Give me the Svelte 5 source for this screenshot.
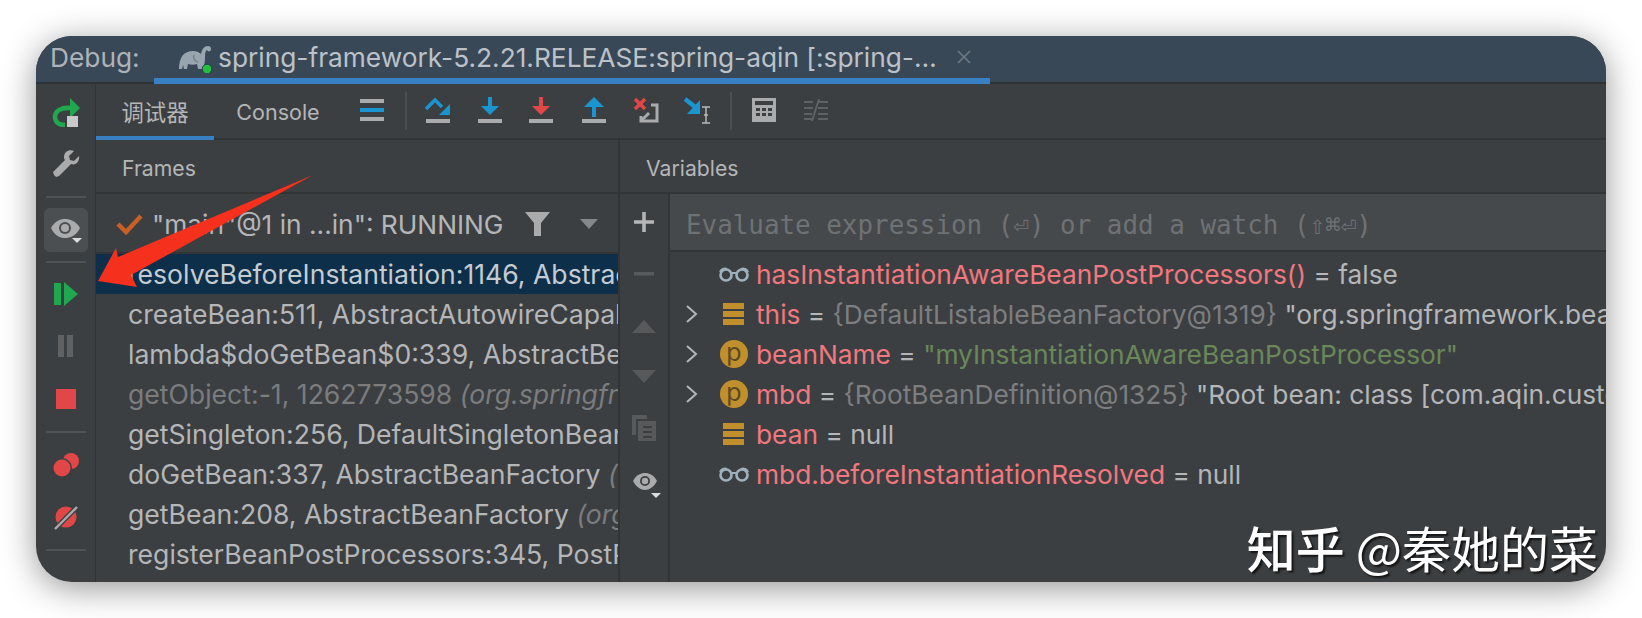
<script lang="ts">
	const frames = [
		{ text: 'resolveBeforeInstantiation:1146, AbstractAutowireCapableBeanFactory', selected: true },
		{ text: 'createBean:511, AbstractAutowireCapableBeanFactory' },
		{ text: 'lambda$doGetBean$0:339, AbstractBeanFactory' },
		{ text: 'getObject:-1, 1262773598 ', pkg: '(org.springframework.beans)', muted: true },
		{ text: 'getSingleton:256, DefaultSingletonBeanRegistry' },
		{ text: 'doGetBean:337, AbstractBeanFactory ', pkg: '(org.springframework)' },
		{ text: 'getBean:208, AbstractBeanFactory ', pkg: '(org.springframework)' },
		{ text: 'registerBeanPostProcessors:345, PostProcessorRegistrationDelegate' }
	];
</script>

<div class="page">
	<div class="window">
		<header class="titlebar">
			<span class="debug-label">Debug:</span>
			<div class="run-tab">
				<svg class="gradle" viewBox="0 0 34 28" width="34" height="28">
					<path d="M0 24C0 12 5 6 14 6c3 0 6 1 8 3 1-5 3-8 7-8 2 0 3 1 3 3 0 2-2 3-3 2-1-1-2-1-2 0-1 2-1 4-1 7 0 4-1 8-2 11h-5l-1-5c-3 1-6 1-9 0l-1 5H5l-1-4-1 4H0z" fill="#98a5ae"/>
					<path d="M15 10c-1 3 0 6 4 7" fill="none" stroke="#6f7f8c" stroke-width="1.4"/>
					<circle cx="28" cy="24" r="4.8" fill="#1fc13f" stroke="#2f3c47" stroke-width="1"/>
				</svg>
				<span class="run-name">spring-framework-5.2.21.RELEASE:spring-aqin [:spring-…</span>
				<svg class="close" viewBox="0 0 14 14" width="14" height="14">
					<path d="M1 1l12 12M13 1L1 13" stroke="#6f7a84" stroke-width="1.6"/>
				</svg>
			</div>
		</header>

		<div class="body">
			<aside class="side">
				<svg viewBox="0 0 28 30" width="28" height="30">
					<path d="M19 11C9 10 3 14 3 20c0 5 4 8 10 8" fill="none" stroke="#1fa84f" stroke-width="4.6"/>
					<path d="M18 1l10 10-10 10z" fill="#1fa84f"/>
					<rect x="15" y="19" width="11" height="11" fill="#c9c9c9"/>
				</svg>
				<svg class="wrench" viewBox="0 0 28 28" width="28" height="28">
					<path d="M27 6l-5 5-4-1-1-4 5-5c-5-2-10 1-10 6 0 1 0 2 1 3L1 22l1 3 2 2 3-1 12-12c5 2 9-3 8-8z" fill="#a9abad"/>
				</svg>
				<i class="sep first"></i>
				<div class="eye-btn">
					<svg viewBox="0 0 32 26" width="32" height="26">
						<path d="M1 11C5 4 10 2 15 2s11 2 15 9c-4 8-10 10-15 10S5 19 1 11z" fill="#a9abad"/>
						<circle cx="15" cy="11" r="6" fill="#4c4f51"/>
						<circle cx="15" cy="11" r="4" fill="#a9abad"/>
						<path d="M22 21h10l-5 5z" fill="#dcdcdc"/>
					</svg>
				</div>
				<i class="sep"></i>
				<svg class="resume" viewBox="0 0 26 24" width="26" height="24">
					<rect x="1" y="1" width="7" height="22" fill="#1fa84f"/>
					<path d="M11 0l14 12-14 12z" fill="#1fa84f"/>
				</svg>
				<svg class="pause" viewBox="0 0 18 22" width="18" height="22">
					<rect x="1" y="0" width="6" height="22" fill="#5f6163"/>
					<rect x="10" y="0" width="6" height="22" fill="#5f6163"/>
				</svg>
				<div class="stop"></div>
				<i class="sep stop-sep"></i>
				<svg class="points" viewBox="0 0 28 28" width="28" height="28">
					<circle cx="19" cy="10" r="8" fill="#e14747"/>
					<circle cx="10" cy="17" r="10" fill="#3c3f41"/>
					<circle cx="10" cy="17" r="8.5" fill="#e14747"/>
				</svg>
				<svg class="mute" viewBox="0 0 26 26" width="26" height="26">
					<circle cx="13" cy="13" r="10.5" fill="#e14747"/>
					<path d="M2 25L24 3" stroke="#3c3f41" stroke-width="5"/>
					<path d="M2 25L24 3" stroke="#a9abad" stroke-width="2.4"/>
				</svg>
				<i class="sep last"></i>
			</aside>

			<main class="main">
				<div class="toolbar">
					<div class="tab active">调试器</div>
					<div class="tab console">Console</div>
					<svg class="tool menu" viewBox="0 0 24 22" width="24" height="22">
						<rect y="0" width="24" height="4" fill="#a9abad"/>
						<rect y="9" width="24" height="4" fill="#1b95d0"/>
						<rect y="18" width="24" height="4" fill="#a9abad"/>
					</svg>
					<i class="tool-sep"></i>
					<svg class="tool" viewBox="0 0 26 26" width="26" height="26">
						<path d="M1 12L10 3l7 7" fill="none" stroke="#1b95d0" stroke-width="3.4"/>
						<path d="M25 7v11H14z" fill="#1b95d0"/>
						<rect x="1" y="22" width="24" height="4" fill="#a9abad"/>
					</svg>
					<svg class="tool" viewBox="0 0 24 26" width="24" height="26">
						<rect x="10" y="0" width="4" height="10" fill="#1b95d0"/>
						<path d="M3 9h18l-9 9z" fill="#1b95d0"/>
						<rect y="22" width="24" height="4" fill="#a9abad"/>
					</svg>
					<svg class="tool" viewBox="0 0 24 26" width="24" height="26">
						<rect x="10" y="0" width="4" height="10" fill="#e14747"/>
						<path d="M3 9h18l-9 9z" fill="#e14747"/>
						<rect y="22" width="24" height="4" fill="#a9abad"/>
					</svg>
					<svg class="tool step-out" viewBox="0 0 24 26" width="24" height="26">
						<path d="M12 0l10 10H2z" fill="#1b95d0"/>
						<rect x="10" y="9" width="4" height="11" fill="#1b95d0"/>
						<rect y="22" width="24" height="4" fill="#a9abad"/>
					</svg>
					<svg class="tool" viewBox="0 0 26 26" width="26" height="26">
						<path d="M8 19v5h16V8h-6" fill="none" stroke="#a9abad" stroke-width="3"/>
						<path d="M8 24l8-8" stroke="#a9abad" stroke-width="3"/>
						<path d="M2 2l10 10M12 2L2 12" stroke="#e14747" stroke-width="3.6"/>
					</svg>
					<svg class="tool cursor" viewBox="0 0 28 28" width="28" height="28">
						<path d="M1 3l14 11" stroke="#1b95d0" stroke-width="4.4"/>
						<path d="M16 4v14H3z" fill="#1b95d0"/>
						<path d="M18 11h8M18 27h8M22 11v16M20 19h4" stroke="#b9b9b9" stroke-width="1.5" fill="none"/>
					</svg>
					<i class="tool-sep second"></i>
					<svg class="tool calc" viewBox="0 0 24 24" width="24" height="24">
						<path fill-rule="evenodd" d="M0 0h24v24H0zM3 3v4h18V3zM4 10v3h4v-3zm6 0v3h4v-3zm6 0v3h4v-3zM4 15v3h4v-3zm6 0v3h4v-3zm6 0v3h4v-3z" fill="#a9abad"/>
					</svg>
					<svg class="tool trace" viewBox="0 0 24 22" width="24" height="22">
						<path d="M0 3h9M0 9h9M0 15h8M0 20h8M14 3h10M14 9h10M14 15h10M14 20h10M15 0L8 22" stroke="#5f6163" stroke-width="2"/>
					</svg>
				</div>

				<div class="panels">
					<section class="frames">
						<div class="panel-head">Frames</div>
						<div class="thread">
							<svg viewBox="0 0 28 22" width="28" height="22">
								<path d="M2 11l8 8L25 3" fill="none" stroke="#c75f26" stroke-width="4.5"/>
							</svg>
							<span class="thread-name">"main"@1 in ...in": RUNNING</span>
							<svg class="funnel" viewBox="0 0 26 26" width="26" height="26">
								<path d="M0 1h25l-9 11v13h-7V12z" fill="#a9abad"/>
							</svg>
							<svg class="caret" viewBox="0 0 18 10" width="18" height="10">
								<path d="M0 0h18L9 10z" fill="#85888a"/>
							</svg>
						</div>
						<ul class="frame-list">
							{#each frames as f}
								<li class:selected={f.selected} class:muted={f.muted}>{f.text}{#if f.pkg}<em>{f.pkg}</em>{/if}</li>
							{/each}
						</ul>
					</section>

					<section class="vars">
						<div class="panel-head">Variables</div>
						<div class="vars-body">
							<div class="var-tools">
								<svg viewBox="0 0 20 20" width="20" height="20"><path d="M10 0v20M0 10h20" stroke="#b3b5b7" stroke-width="3.6"/></svg>
								<svg class="dim-minus" viewBox="0 0 20 4" width="20" height="4"><rect width="20" height="3.6" fill="#57595b"/></svg>
								<svg class="dim-up" viewBox="0 0 24 14" width="24" height="14"><path d="M12 0l12 13H0z" fill="#57595b"/></svg>
								<svg class="dim-down" viewBox="0 0 24 14" width="24" height="14"><path d="M0 0h24L12 13z" fill="#57595b"/></svg>
								<svg class="dim-copy" viewBox="0 0 24 26" width="24" height="26">
									<path d="M0 0h15v4H4v16H0z" fill="#57595b"/>
									<path fill-rule="evenodd" d="M6 6h18v20H6zM11 11v2h9v-2zm0 5v2h9v-2zm0 5v2h9v-2z" fill="#57595b"/>
								</svg>
								<svg class="mini-eye" viewBox="0 0 28 27" width="28" height="27">
									<path d="M0 9C3 3 8 1 12 1s9 2 12 8c-3 6-8 9-12 9S3 15 0 9z" fill="#a9abad"/>
									<circle cx="12" cy="9" r="5" fill="#3c3f41"/>
									<circle cx="12" cy="9" r="3.2" fill="#a9abad"/>
									<path d="M18 21h10l-5 5z" fill="#dcdcdc"/>
								</svg>
							</div>
							<div class="vars-content">
								<div class="evaluate">Evaluate expression (⏎) or add a watch (⇧⌘⏎)</div>
								<div class="var-list">
									<div class="row">
										<span class="chev"></span>
										<span class="slot">
											<svg viewBox="0 0 32 16" width="32" height="16">
												<circle cx="8" cy="9" r="5.5" fill="none" stroke="#9fb0bd" stroke-width="2.6"/>
												<circle cx="24" cy="9" r="5.5" fill="none" stroke="#9fb0bd" stroke-width="2.6"/>
												<path d="M2 6c1-3 4-4 7-3M30 6c-1-3-4-4-7-3M13 7h6" fill="none" stroke="#9fb0bd" stroke-width="2"/>
											</svg>
										</span>
										<span class="line"><span class="name">hasInstantiationAwareBeanPostProcessors()</span> = false</span>
									</div>
									<div class="row">
										<svg class="chev" viewBox="0 0 12 18" width="12" height="18"><path d="M1 1l9 8-9 8" fill="none" stroke="#b3b5b7" stroke-width="2"/></svg>
										<span class="slot">
											<svg viewBox="0 0 22 22" width="22" height="22">
												<rect width="21" height="6" fill="#c18f2c"/><rect y="8" width="21" height="6" fill="#c18f2c"/><rect y="16" width="21" height="6" fill="#c18f2c"/>
											</svg>
										</span>
										<span class="line"><span class="name">this</span> = <span class="ref">{'{'}DefaultListableBeanFactory@1319{'}'}</span> "org.springframework.beans.factory.support.DefaultListableBeanFactory"</span>
									</div>
									<div class="row">
										<svg class="chev" viewBox="0 0 12 18" width="12" height="18"><path d="M1 1l9 8-9 8" fill="none" stroke="#b3b5b7" stroke-width="2"/></svg>
										<span class="slot"><span class="badge">p</span></span>
										<span class="line"><span class="name">beanName</span> = <span class="str">"myInstantiationAwareBeanPostProcessor"</span></span>
									</div>
									<div class="row">
										<svg class="chev" viewBox="0 0 12 18" width="12" height="18"><path d="M1 1l9 8-9 8" fill="none" stroke="#b3b5b7" stroke-width="2"/></svg>
										<span class="slot"><span class="badge">p</span></span>
										<span class="line"><span class="name">mbd</span> = <span class="ref">{'{'}RootBeanDefinition@1325{'}'}</span> "Root bean: class [com.aqin.custom.MyInstantiationAwareBeanPostProcessor]"</span>
									</div>
									<div class="row">
										<span class="chev"></span>
										<span class="slot">
											<svg viewBox="0 0 22 22" width="22" height="22">
												<rect width="21" height="6" fill="#c18f2c"/><rect y="8" width="21" height="6" fill="#c18f2c"/><rect y="16" width="21" height="6" fill="#c18f2c"/>
											</svg>
										</span>
										<span class="line"><span class="name">bean</span> = null</span>
									</div>
									<div class="row">
										<span class="chev"></span>
										<span class="slot">
											<svg viewBox="0 0 32 16" width="32" height="16">
												<circle cx="8" cy="9" r="5.5" fill="none" stroke="#9fb0bd" stroke-width="2.6"/>
												<circle cx="24" cy="9" r="5.5" fill="none" stroke="#9fb0bd" stroke-width="2.6"/>
												<path d="M2 6c1-3 4-4 7-3M30 6c-1-3-4-4-7-3M13 7h6" fill="none" stroke="#9fb0bd" stroke-width="2"/>
											</svg>
										</span>
										<span class="line"><span class="name">mbd.beforeInstantiationResolved</span> = null</span>
									</div>
								</div>
							</div>
						</div>
					</section>
				</div>
			</main>
		</div>

		<!-- annotation drawn over the screenshot -->
		<svg class="arrow" viewBox="0 0 320 300" width="320" height="300">
			<path d="M313 175L118 257 116 248 98 281 137 287 131 275z" fill="#f5301c"/>
		</svg>
		<div class="watermark"><b>知乎</b> @秦她的菜</div>
	</div>
</div>

<style>
	:global(body) {
		margin: 0;
		background: #fff;
	}
	.page {
		width: 1642px;
		height: 618px;
		padding: 36px;
		box-sizing: border-box;
		overflow: hidden;
		font-family: Inter, 'Noto Sans CJK SC', sans-serif;
	}
	.window {
		position: relative;
		width: 1570px;
		height: 546px;
		border-radius: 36px;
		overflow: hidden;
		background: #3c3f41;
		box-shadow: 0 6px 34px rgba(0, 0, 0, 0.42);
		color: #b4b6b8;
		font-size: 26.3px;
	}
	.titlebar {
		height: 46px;
		background: #384857;
		border-bottom: 2px solid #2f3235;
		display: flex;
		align-items: center;
	}
	.debug-label {
		margin-left: 14px;
		margin-bottom: 3px;
		width: 104px;
		color: #aeb3b8;
	}
	.run-tab {
		align-self: stretch;
		width: 836px;
		height: 48px;
		box-sizing: border-box;
		border-bottom: 6px solid #3a80c4;
		display: flex;
		align-items: center;
		padding-left: 25px;
		white-space: nowrap;
		color: #bcc2c8;
	}
	.gradle {
		flex: none;
		margin-right: 5px;
		margin-top: 4px;
	}
	.close {
		margin-left: 20px;
		flex: none;
	}
	.body {
		display: flex;
		height: 498px;
	}
	.side {
		width: 59px;
		flex: none;
		border-right: 1px solid #313335;
		display: flex;
		flex-direction: column;
		align-items: center;
		padding-top: 13px;
	}
	.wrench {
		margin-top: 23px;
	}
	.sep {
		display: block;
		width: 40px;
		height: 2px;
		background: #505355;
		margin-top: 18px;
	}
	.eye-btn {
		width: 44px;
		height: 44px;
		margin-top: 10px;
		margin-bottom: 9px;
		background: #4c4f51;
		border-radius: 6px;
		display: flex;
		align-items: center;
		justify-content: center;
	}
	.sep.first + .eye-btn + .sep {
		margin-top: 0;
	}
	.resume {
		margin-top: 19px;
	}
	.pause {
		margin-top: 29px;
	}
	.stop {
		width: 20px;
		height: 20px;
		background: #e14747;
		margin-top: 32px;
	}
	.sep.stop-sep {
		margin-top: 22px;
	}
	.points {
		margin-top: 18px;
	}
	.mute {
		margin-top: 25px;
	}
	.sep.last {
		margin-top: 19px;
	}
	.main {
		flex: 1;
		min-width: 0;
		display: flex;
		flex-direction: column;
	}
	.toolbar {
		flex: none;
		display: flex;
		align-items: center;
		border-bottom: 2px solid #323436;
		box-sizing: border-box;
		height: 56px;
	}
	.tab {
		align-self: stretch;
		display: flex;
		align-items: center;
		justify-content: center;
		font-size: 21.5px;
		padding-top: 2px;
		box-sizing: border-box;
		color: #b4b6b8;
	}
	.tab.active {
		width: 118px;
		border-bottom: 4px solid #3a80c4;
		margin-bottom: -2px;
		font-size: 22.4px;
	}
	.tab.console {
		width: 128px;
		margin-right: 18px;
	}
	.tool {
		flex: none;
		margin-left: 27px;
		margin-bottom: 3px;
	}
	.tool.menu {
		margin-left: 0;
	}
	.tool.step-out {
		margin-left: 29px;
	}
	.tool.cursor {
		margin-left: 25px;
	}
	.tool.trace {
		margin-left: 28px;
	}
	.tool-sep {
		flex: none;
		width: 2px;
		height: 38px;
		background: #4c4f51;
		margin-left: 21px;
		margin-right: -9px;
	}
	.tool-sep.second {
		margin-left: 18px;
		margin-right: -7px;
	}
	.panels {
		flex: 1;
		display: flex;
		min-height: 0;
	}
	.frames {
		width: 522px;
		flex: none;
		overflow: hidden;
		border-right: 2px solid #323436;
	}
	.panel-head {
		height: 54px;
		box-sizing: border-box;
		border-bottom: 2px solid #323436;
		padding-left: 26px;
		padding-top: 3px;
		display: flex;
		align-items: center;
		font-size: 21.2px;
		color: #b4b6b8;
	}
	.thread {
		height: 60px;
		display: flex;
		align-items: center;
		padding-left: 20px;
		padding-top: 2px;
		white-space: nowrap;
		border-bottom: 2px solid #323436;
		box-sizing: border-box;
	}
	.thread-name {
		margin-left: 8px;
	}
	.funnel {
		flex: none;
		margin-left: 22px;
	}
	.caret {
		flex: none;
		margin-left: 29px;
	}
	.frame-list {
		list-style: none;
		margin: 0;
		padding: 0;
	}
	.frame-list li {
		height: 40px;
		line-height: 40px;
		padding-left: 32px;
		white-space: nowrap;
		overflow: hidden;
		font-size: 26.6px;
		color: #b4b6b8;
	}
	.frame-list li.selected {
		background: #0d2f4a;
		color: #c4ccd2;
	}
	.frame-list li.muted {
		color: #7a7c7e;
	}
	.frame-list em {
		color: #7a7c7e;
	}
	.vars {
		flex: 1;
		min-width: 0;
		overflow: hidden;
		display: flex;
		flex-direction: column;
	}
	.vars-body {
		flex: 1;
		display: flex;
		min-height: 0;
	}
	.var-tools {
		width: 48px;
		flex: none;
		border-right: 2px solid #323436;
		display: flex;
		flex-direction: column;
		align-items: center;
		padding-top: 18px;
	}
	.dim-minus {
		margin-top: 40px;
	}
	.dim-up {
		margin-top: 44px;
	}
	.dim-down {
		margin-top: 36px;
	}
	.dim-copy {
		margin-top: 31px;
	}
	.mini-eye {
		margin-top: 31px;
		margin-left: 6px;
	}
	.vars-content {
		flex: 1;
		min-width: 0;
	}
	.evaluate {
		height: 58px;
		box-sizing: border-box;
		background: #46494b;
		border-bottom: 2px solid #323436;
		padding-left: 16px;
		padding-top: 5px;
		display: flex;
		align-items: center;
		font-family: 'DejaVu Sans Mono', monospace;
		font-size: 25.9px;
		color: #6f7274;
		white-space: nowrap;
	}
	.var-list {
		padding-top: 2px;
	}
	.row {
		height: 40px;
		display: flex;
		align-items: center;
		white-space: nowrap;
		padding-left: 16px;
	}
	.chev {
		flex: none;
		width: 12px;
	}
	.slot {
		flex: none;
		width: 44px;
		margin-left: 14px;
		display: flex;
		justify-content: center;
	}
	.badge {
		width: 28px;
		height: 28px;
		border-radius: 50%;
		background: #c18f2c;
		color: #5a4a26;
		font-size: 25px;
		line-height: 24px;
		text-align: center;
	}
	.name {
		color: #f2777f;
	}
	.ref {
		color: #7c7e80;
	}
	.str {
		color: #6a8759;
	}
	.arrow {
		position: absolute;
		left: -36px;
		top: -36px;
		pointer-events: none;
	}
	.watermark {
		position: absolute;
		right: 8px;
		bottom: 7px;
		font-family: 'Noto Sans CJK SC', sans-serif;
		font-size: 49px;
		line-height: 56px;
		color: #fff;
		white-space: nowrap;
		text-shadow: 2px 2px 2px rgba(0, 0, 0, 0.7);
	}
	.watermark b {
		font-weight: 500;
	}
</style>
